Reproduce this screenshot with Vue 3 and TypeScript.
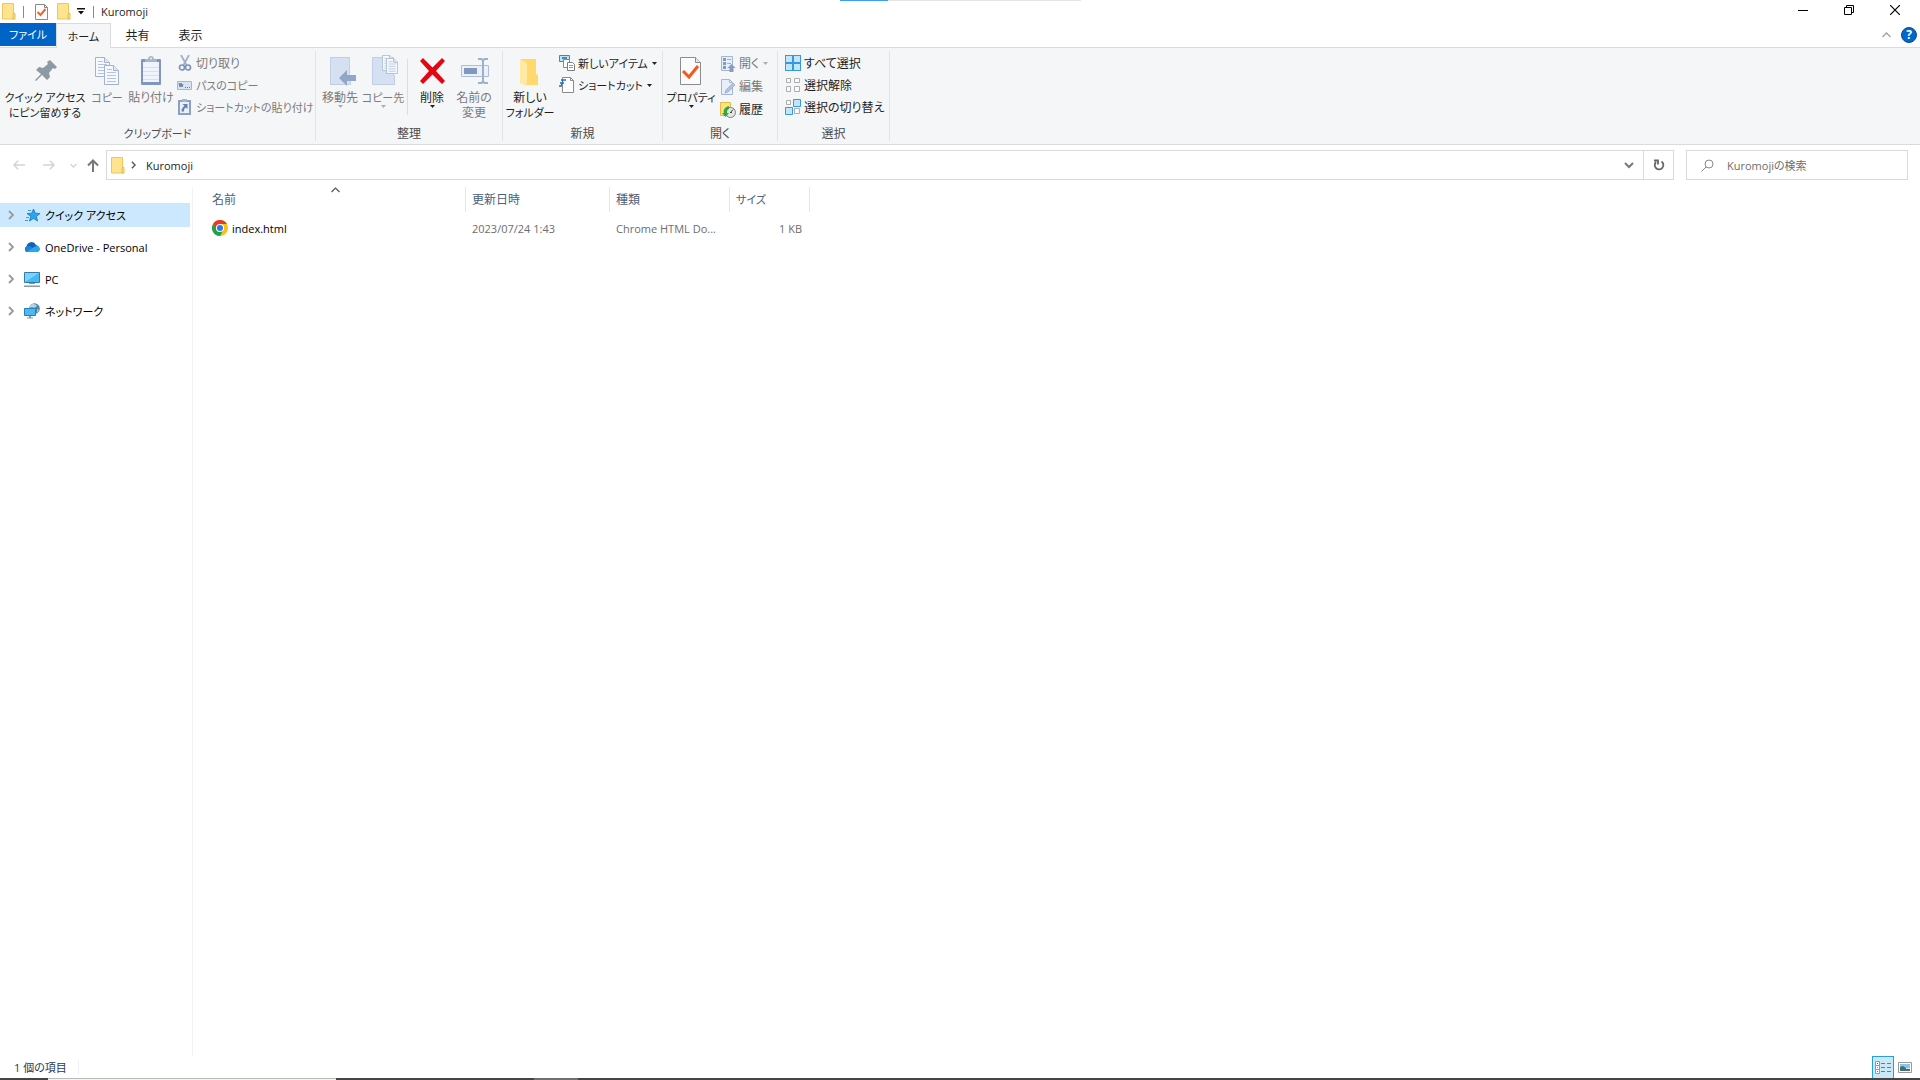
<script setup lang="ts">
import { ref } from 'vue'

interface FileRow {
  name: string
  modified: string
  kind: string
  size: string
}

const folderName = 'Kuromoji'
const query = ref('')
const files: FileRow[] = [
  { name: 'index.html', modified: '2023/07/24 1:43', kind: 'Chrome HTML Do...', size: '1 KB' },
]
</script>

<template>
  <div class="window">
    <svg class="defs" width="0" height="0" aria-hidden="true">
      <symbol id="folder" viewBox="0 0 14 17">
        <path d="M.5.5h11v12h1v3.5H.5z" fill="#ffe48f" stroke="#ebc75c" />
        <path d="M11.5 10.500h1.500v5.500h-2v-4z" fill="#ffe9a6" stroke="#e3ba4a" />
      </symbol>
      <symbol id="page" viewBox="0 0 15 20">
        <path d="M.5.5h9l5 5v14H.5z" fill="#f5f8fd" stroke="#a3b3cd" />
        <path d="M9.500.5v5h5" fill="#dfe8f5" stroke="#a3b3cd" />
        <path d="M3 4.500h5M3 7.500h9M3 10.500h9M3 13.500h9M3 16.500h9" stroke="#b4c4de" />
      </symbol>
      <symbol id="chev" viewBox="0 0 6 10">
        <path d="M1 1l4 4-4 4" fill="none" stroke="currentColor" stroke-width="1.800" />
      </symbol>
      <symbol id="down" viewBox="0 0 5 3">
        <path d="M0 0h5L2.500 3z" fill="currentColor" />
      </symbol>
    </svg>

    <div class="progress"><span></span></div>

    <header class="titlebar">
      <svg width="14" height="17"><use href="#folder" /></svg>
      <span class="bar"></span>
      <button class="quick" aria-label="プロパティ">
        <svg width="13" height="16" viewBox="0 0 13 16">
          <path d="M.5.5h9l3 3v12H.5z" fill="#fcfcfc" stroke="#8b8b8b" />
          <path d="M9.500.5v3h3" fill="none" stroke="#8b8b8b" />
          <path d="M2.500 8l3 3 5-6" fill="none" stroke="#f0642a" stroke-width="2" />
        </svg>
      </button>
      <button class="quick second" aria-label="新しいフォルダー">
        <svg width="14" height="17"><use href="#folder" /></svg>
      </button>
      <button class="quick third" aria-label="クイック アクセス ツール バーのカスタマイズ">
        <svg width="8" height="7" viewBox="0 0 8 7"><path d="M0 0h8v1.500H0zM1 3h6L4 6.500z" fill="#111" /></svg>
      </button>
      <span class="bar last"></span>
      <h1 class="slim">{{ folderName }}</h1>
      <div class="caption">
        <button aria-label="最小化"><svg width="10" height="10" viewBox="0 0 10 10"><path d="M0 5.500h10" stroke="#000" /></svg></button>
        <button aria-label="元に戻す"><svg width="10" height="10" viewBox="0 0 10 10"><path d="M.5 2.500h7v7h-7zM2.500 2.500v-2h7v7h-2" fill="none" stroke="#000" /></svg></button>
        <button aria-label="閉じる"><svg width="10" height="10" viewBox="0 0 10 10"><path d="M0 0l10 10M10 0L0 10" stroke="#000" stroke-width="1.200" /></svg></button>
      </div>
    </header>

    <nav class="tabs">
      <button class="file slim">ファイル</button>
      <button class="active slim">ホーム</button>
      <button>共有</button>
      <button>表示</button>
      <div class="tabtools">
        <button aria-label="リボンの最小化"><svg width="9" height="6" viewBox="0 0 9 6"><path d="M.5 5l4-4 4 4" fill="none" stroke="#a0a0a0" stroke-width="1.300" /></svg></button>
        <button class="help" aria-label="ヘルプ">?</button>
      </div>
    </nav>

    <section class="ribbon">
      <div class="group clipboard">
        <div class="tools">
          <button class="big wide slim">
            <svg width="32" height="32" viewBox="0 0 32 32"><path d="M21 5l7 7-2 2-2-1-4 5 1 4-3 3-5-5-6 6-1-1 6-6-5-4 3-3 4 1 5-4-1-2z" fill="#8d99a3" /></svg>
            <span>クイック アクセス<br>にピン留めする</span>
          </button>
          <button class="big dim w42 slim">
            <svg width="32" height="32" viewBox="0 0 32 32"><use href="#page" x="4" y="2" width="15" height="20" /><use href="#page" x="13" y="10" width="15" height="20" /></svg>
            <span>コピー</span>
          </button>
          <button class="big dim w46">
            <svg width="32" height="32" viewBox="0 0 32 32">
              <rect x="6" y="4" width="20" height="26" rx="1" fill="#8096bd" />
              <rect x="8" y="7" width="16" height="20" fill="#eff4fc" />
              <path d="M8 12.500h16M8 16.500h16M8 20.500h16M8 24.500h16" stroke="#d5e0f1" />
              <path d="M10 7V4h3c0-4 6-4 6 0h3v3z" fill="#a9b6c9" /><circle cx="16" cy="3.500" r="1" fill="#eef" />
            </svg>
            <span>貼り付け</span>
          </button>
          <div class="list">
            <button class="small dim">
              <svg width="16" height="16" viewBox="0 0 16 16"><path d="M4 0l5.500 10M12 0L6.500 10" stroke="#a3b1c6" stroke-width="1.800" /><circle cx="5" cy="12.500" r="2.500" fill="none" stroke="#7e93b8" stroke-width="1.700" /><circle cx="11" cy="12.500" r="2.500" fill="none" stroke="#7e93b8" stroke-width="1.700" /></svg>
              切り取り
            </button>
            <button class="small dim slim">
              <svg width="16" height="16" viewBox="0 0 16 16"><path d="M.5 4.500h14v8H.5z" fill="#d9e3f2" stroke="#a7b7d0" /><path d="M2 6l1 4 1-4 1 4 1-3M8 10.500h1M10 10.500h1M12 10.500h1" fill="none" stroke="#637ba5" /></svg>
              パスのコピー
            </button>
            <button class="small dim slim">
              <svg width="16" height="16" viewBox="0 0 16 16"><path d="M2 2h11v13H2z" fill="#e9f0fa" stroke="#8ba0c4" stroke-width="2" /><path d="M5 0h5v3H5z" fill="#a9b6c9" /><path d="M5.500 5h5v5L9 8.500c-2 1-2 2-2 4H4.500c0-3 1-4 3-5.500z" fill="#6681b0" /></svg>
              ショートカットの貼り付け
            </button>
          </div>
        </div>
        <h2 class="slim">クリップボード</h2>
      </div>

      <div class="group organise">
        <div class="tools">
          <button class="big dim w44">
            <svg width="32" height="32" viewBox="0 0 32 32"><path d="M6.500 2.500h19v18h1v9h-20z" fill="#d5e1f2" stroke="#c0cfe5" /><path d="M15 23l8-8v5h9v6h-9v5z" fill="#93a6c7" /></svg>
            <span>移動先</span>
            <svg class="caret" width="5" height="3"><use href="#down" /></svg>
          </button>
          <button class="big dim w42 slim">
            <svg width="32" height="32" viewBox="0 0 32 32"><path d="M5.500 2.500h21v18h1v9h-22z" fill="#d5e1f2" stroke="#c0cfe5" /><use href="#page" x="15" y="0" width="12" height="16" /><use href="#page" x="19" y="3" width="12" height="16" /></svg>
            <span>コピー先</span>
            <svg class="caret" width="5" height="3"><use href="#down" /></svg>
          </button>
          <span class="rule"></span>
          <button class="big w44">
            <svg width="32" height="32" viewBox="0 0 32 32"><path d="M4 6l3-3 9.500 9.500L26 3l3 3-9 10 9 10-3 3-9.500-9.500L7 29l-3-3 9-10z" fill="#e30613" /></svg>
            <span>削除</span>
            <svg class="caret" width="5" height="3"><use href="#down" /></svg>
          </button>
          <button class="big dim w40">
            <svg width="32" height="32" viewBox="0 0 32 32"><path d="M3.500 10.500h27v11h-27z" fill="#eaf1fb" stroke="#adbdd8" /><path d="M6 13h13v6H6z" fill="#8097bf" /><path d="M20 3h4l1 1 1-1h4v2h-3l-1 1v20l1 1h3v2h-4l-1-1-1 1h-4v-2h3l1-1V6l-1-1h-3z" fill="#9eb0cd" /></svg>
            <span>名前の<br>変更</span>
          </button>
        </div>
        <h2>整理</h2>
      </div>

      <div class="group create">
        <div class="tools">
          <button class="big w52">
            <svg width="32" height="32" viewBox="0 0 32 32"><path d="M6 4h16v15l2 1v10H12L6 28z" fill="#ffd96e" /><path d="M6 4l7 4v19l-1 4-6-3z" fill="#ffe9a5" /></svg>
            <span>新しい</span>
            <span class="slim second-line">フォルダー</span>
          </button>
          <div class="list">
            <button class="small slim">
              <svg width="16" height="16" viewBox="0 0 16 16"><path d="M.5.5h10v6H.5z" fill="#bfe2f5" stroke="#5e7e93" /><path d="M3 2h5v2H3z" fill="#438fb5" /><path d="M4.500 4.500h6v8h-6z" fill="#fff" stroke="#8a8a8a" /><path d="M8.500 7.500h5l2 2v6h-7z" fill="#fff" stroke="#7d7d7d" /><path d="M10 10.500h4M10 12.500h4" stroke="#6aa6d5" /></svg>
              新しいアイテム
              <svg class="drop" width="5" height="3"><use href="#down" /></svg>
            </button>
            <button class="small slim">
              <svg width="16" height="16" viewBox="0 0 16 16"><path d="M3.500.5h8l3 3v12h-11z" fill="#fff" stroke="#8a8a8a" /><path d="M11.500.5v3h3" fill="none" stroke="#8a8a8a" /><path d="M2 3h5M1 6h4M0 9h3" stroke="#1675c6" stroke-width="1.500" /><path d="M4 3L2 9" stroke="#1675c6" /></svg>
              ショートカット
              <svg class="drop" width="5" height="3"><use href="#down" /></svg>
            </button>
          </div>
        </div>
        <h2>新規</h2>
      </div>

      <div class="group open">
        <div class="tools">
          <button class="big w52 slim">
            <svg width="32" height="32" viewBox="0 0 32 32"><path d="M5.500 2.500h15l5 5v22h-20z" fill="#fbfbfb" stroke="#8c8c8c" /><path d="M20.500 2.500v5h5" fill="#e8e8e8" stroke="#8c8c8c" /><path d="M8 16l6 6 9-11" fill="none" stroke="#f2591b" stroke-width="3" /></svg>
            <span>プロパティ</span>
            <svg class="caret" width="5" height="3"><use href="#down" /></svg>
          </button>
          <div class="list tall">
            <button class="small dim">
              <svg width="16" height="16" viewBox="0 0 16 16"><path d="M1.500.5h11v14h-11z" fill="#e6eefa" stroke="#a4b6d3" /><path d="M3 2h3v3H3zM3 6h3v3H3zM3 10h3v3H3z" fill="#8499c0" /><path d="M7 3.500h4M7 7.500h4" stroke="#9eb1d0" /><path d="M11.500 8l4 4h-2v4h-4v-4h-2z" fill="#869cc1" /></svg>
              開く
              <svg class="drop" width="5" height="3"><use href="#down" /></svg>
            </button>
            <button class="small dim">
              <svg width="16" height="16" viewBox="0 0 16 16"><path d="M1.500.5h8l3 3v12h-11z" fill="#e6eefa" stroke="#a4b6d3" /><path d="M9.500.5v3h3" fill="none" stroke="#a4b6d3" /><path d="M5 14l1-3 7-7 2 2-7 7z" fill="#b3c4e0" stroke="#8fa4c8" stroke-width=".7" /></svg>
              編集
            </button>
            <button class="small">
              <svg width="16" height="16" viewBox="0 0 16 16"><path d="M.5.5h10v13H.5z" fill="#ffe180" stroke="#e3bd4b" /><circle cx="10.500" cy="10.500" r="5" fill="#e5e5e5" stroke="#7d7d7d" /><path d="M10.500 10.500l2.500-3M10 10.500h2" stroke="#444" /><path d="M9 4C4 5 3 9 4 11H2l3.500 4L9 11H7c0-3 1-4 2-4z" fill="#31a83a" /></svg>
              履歴
            </button>
          </div>
        </div>
        <h2>開く</h2>
      </div>

      <div class="group select">
        <div class="tools">
          <div class="list">
            <button class="small">
              <svg width="16" height="16" viewBox="0 0 16 16"><path d="M0 0h16v16H0z" fill="#3498e4" /><path d="M1 1h6v6H1zM9 1h6v6H9zM1 9h6v6H1zM9 9h6v6H9z" fill="#c3e5fb" /></svg>
              すべて選択
            </button>
            <button class="small">
              <svg width="16" height="16" viewBox="0 0 16 16"><path d="M1.500 1.500h4v4h-4zM9.500 1.500h5v4h-5zM1.500 9.500h4v5h-4zM9.500 9.500h5v5h-5z" fill="#fafafa" stroke="#adadad" /></svg>
              選択解除
            </button>
            <button class="small">
              <svg width="16" height="16" viewBox="0 0 16 16"><path d="M1.500 1.500h4v4h-4zM9.500 9.500h5v5h-5z" fill="#fafafa" stroke="#adadad" /><path d="M8.500.5h7v7h-7zM.5 8.500h7v7h-7z" fill="#c3e5fb" stroke="#3498e4" /></svg>
              選択の切り替え
            </button>
          </div>
        </div>
        <h2>選択</h2>
      </div>
    </section>

    <section class="addressrow">
      <button class="nav faint" aria-label="戻る"><svg width="12" height="10" viewBox="0 0 12 10"><path d="M12 5H1M5 .7L1 5l4 4.300" fill="none" stroke="currentColor" stroke-width="1.600" /></svg></button>
      <button class="nav faint" aria-label="進む"><svg width="12" height="10" viewBox="0 0 12 10"><path d="M0 5h11M7 .7L11 5 7 9.300" fill="none" stroke="currentColor" stroke-width="1.600" /></svg></button>
      <button class="nav faint narrow" aria-label="最近表示した場所"><svg width="7" height="5" viewBox="0 0 7 5"><path d="M.5 1l3 3 3-3" fill="none" stroke="currentColor" stroke-width="1.400" /></svg></button>
      <button class="nav up" aria-label="上へ"><svg width="12" height="13" viewBox="0 0 12 13"><path d="M6 13V1.500M1 6.500l5-5 5 5" fill="none" stroke="currentColor" stroke-width="2" /></svg></button>
      <div class="address">
        <svg width="14" height="17"><use href="#folder" /></svg>
        <svg class="crumb" width="5" height="8"><use href="#chev" /></svg>
        <button class="path slim">{{ folderName }}</button>
        <button class="history" aria-label="以前の場所"><svg width="10" height="7" viewBox="0 0 10 7"><path d="M1 1l4 4 4-4" fill="none" stroke="#777" stroke-width="2" /></svg></button>
        <button class="refresh" aria-label="最新の情報に更新"><svg width="12" height="12" viewBox="0 0 12 12"><path d="M8.500 2.500A4.300 4.300 0 1 1 3 3M1 1.500h4v4" fill="none" stroke="#666" stroke-width="1.800" /></svg></button>
      </div>
      <label class="search slim">
        <svg width="13" height="13" viewBox="0 0 13 13"><circle cx="8" cy="5" r="4" fill="none" stroke="#888" /><path d="M5 8L.5 12.500" stroke="#888" /></svg>
        <input v-model="query" type="text" aria-label="検索" :placeholder="`${folderName}の検索`">
      </label>
    </section>

    <div class="body">
      <nav class="tree slim">
        <a href="#" class="current">
          <svg class="exp" width="6" height="10"><use href="#chev" /></svg>
          <svg width="16" height="16" viewBox="0 0 16 16"><path d="M9.500 2l1.800 4.200 4.700.3-3.600 3 1.200 4.500-4.100-2.500-4 2.500 1.200-4.500L3 6.500l4.700-.3z" fill="#2fa3ee" stroke="#1777bf" stroke-width=".8" /><path d="M4 3.500h3M2 10.500h3M1 13.500h3" stroke="#3d9ad8" /></svg>
          クイック アクセス
        </a>
        <a href="#">
          <svg class="exp" width="6" height="10"><use href="#chev" /></svg>
          <svg width="16" height="16" viewBox="0 0 16 16"><path d="M3 13a3 3 0 0 1-.5-5.500A5 5 0 0 1 12 6a3.800 3.800 0 0 1 1 7z" fill="#0f62b8" /><path d="M3 13a3 3 0 0 1-.5-5.500c2-.8 4-.4 6 1.500L12 6.500c4.500.5 5 5.500 1 6.500z" fill="#1784d9" /><path d="M3 13l5.500-4L13 7c3.500 1 4 5 0 6z" fill="#28a8ea" /></svg>
          OneDrive - Personal
        </a>
        <a href="#">
          <svg class="exp" width="6" height="10"><use href="#chev" /></svg>
          <svg width="16" height="16" viewBox="0 0 16 16"><path d="M.5 1.500h15v10H.5z" fill="#46b9f5" stroke="#317da8" /><path d="M1 2h14L1 11z" fill="#7bd2fc" /><path d="M5 12h6v1H5zM0 14.500h16v1.500H0z" fill="#8799a8" /></svg>
          PC
        </a>
        <a href="#">
          <svg class="exp" width="6" height="10"><use href="#chev" /></svg>
          <svg width="16" height="16" viewBox="0 0 16 16"><circle cx="10.500" cy="5.500" r="5.300" fill="#4f87ab" /><path d="M6 3c2-3 6-2 7 0l-3 2-2-1-2 1z" fill="#b5d3e2" /><path d="M13 6l2 1-2 3z" fill="#a5c9dc" /><path d="M.5 5.500h11v7H.5z" fill="#4bb9f3" stroke="#2a7fb3" /><path d="M5 13h2v1.500H5zM3 14.500h6v1H3z" fill="#8799a8" /></svg>
          ネットワーク
        </a>
      </nav>

      <main>
        <table>
          <thead>
            <tr>
              <th class="c-name">名前<svg class="sort" width="9" height="6" viewBox="0 0 9 6"><path d="M.5 5l4-4 4 4" fill="none" stroke="#555" stroke-width="1.200" /></svg></th>
              <th class="c-date">更新日時</th>
              <th class="c-kind">種類</th>
              <th class="c-size slim">サイズ</th>
            </tr>
          </thead>
          <tbody class="slim">
            <tr v-for="file in files" :key="file.name">
              <td>
                <a href="#" class="entry">
                  <svg width="16" height="16" viewBox="0 0 16 16"><circle cx="8" cy="8" r="8" fill="#fbc116" /><path d="M1.070 4a8 8 0 0 1 13.860 0H8L4.500 10z" fill="#e33b2e" /><path d="M1.070 4A8 8 0 0 0 8 16l3.300-6H4.600z" fill="#1fa04b" /><circle cx="8" cy="8" r="4" fill="#fff" /><circle cx="8" cy="8" r="3" fill="#2a78ea" /></svg>
                  {{ file.name }}
                </a>
              </td>
              <td>{{ file.modified }}</td>
              <td>{{ file.kind }}</td>
              <td class="num">{{ file.size }}</td>
            </tr>
          </tbody>
        </table>
      </main>
    </div>

    <footer class="status">
      <span class="count slim">1 個の項目</span>
      <div class="views">
        <button class="details" aria-label="詳細">
          <svg width="16" height="13" viewBox="0 0 16 13"><path d="M.5.5h4v12h-4zM.5 4.500h4M.5 8.500h4" fill="#fff" stroke="#999" /><path d="M2 2h1v1H2z" fill="#555" /><path d="M2 6h1v1H2z" fill="#38a2e5" /><path d="M2 10h1v1H2z" fill="#d33" /><path d="M6 2.500h4M12 2.500h4M6 6.500h4M12 6.500h4M6 10.500h4M12 10.500h4" stroke="#777" /></svg>
        </button>
        <button class="thumbs" aria-label="大アイコン">
          <svg width="14" height="11" viewBox="0 0 14 11"><path d="M.5.5h13v10H.5z" fill="#fff" stroke="#999" /><path d="M2 2h10v7H2z" fill="#8fc0ee" /><path d="M2 5l3-1 3 2h4v3H2z" fill="#42706c" /><path d="M8 6h4v1H8z" fill="#cfe2ee" /></svg>
        </button>
      </div>
    </footer>
    <div class="taskbar"><span class="light"></span><span class="mid"></span></div>
  </div>
</template>

<style>
html,
body {
  background: #fff;
}
</style>

<style scoped>
.window {
  position: relative;
  display: flex;
  flex-direction: column;
  min-height: 100vh;
  background: #fff;
  color: #1e1e1e;
  font: 12px/15px "Open Sans", "Noto Sans CJK JP", sans-serif;
  font-feature-settings: "palt";
}
.window * {
  box-sizing: border-box;
}
.defs {
  position: absolute;
}
button,
input {
  margin: 0;
  padding: 0;
  border: 0;
  background: none;
  color: inherit;
  font: inherit;
  font-feature-settings: inherit;
}
a {
  color: inherit;
  text-decoration: none;
}
svg {
  display: block;
  flex: none;
}
h1,
h2 {
  margin: 0;
  font-size: 12px;
  font-weight: 400;
}
.slim {
  font-size: 11px;
}
.progress {
  position: absolute;
  top: 0;
  left: 840px;
  width: 241px;
  height: 1px;
  background: #e5e5e5;
}
.progress span {
  display: block;
  width: 48px;
  height: 1px;
  background: #3e9bff;
}

.titlebar {
  display: flex;
  align-items: center;
  height: 23px;
  padding-left: 2px;
}
.bar {
  width: 1px;
  height: 12px;
  margin: 0 11px 0 7px;
  background: #8a8a8a;
}
.bar.last {
  margin: 0 7px 0 8px;
}
.quick.second {
  margin-left: 9px;
}
.quick.third {
  margin-left: 6px;
}
.caption {
  display: flex;
  align-self: flex-start;
  margin-left: auto;
  padding-right: 2px;
}
.caption button {
  display: flex;
  align-items: center;
  justify-content: center;
  width: 46px;
  height: 20px;
}

.tabs {
  display: flex;
  height: 24px;
  flex: none;
}
.tabs > button {
  width: 53px;
  height: 25px;
}
.tabs > .file {
  width: 56px;
  height: 23px;
  background: #0063c6;
  color: #fff;
}
.tabs > .active {
  position: relative;
  width: 55px;
  border: 1px solid #dadbdc;
  border-bottom: 0;
  background: #f5f6f7;
}
.tabtools {
  display: flex;
  align-items: center;
  gap: 10px;
  margin-left: auto;
  padding-right: 3px;
}
.help {
  width: 16px;
  height: 16px;
  border: 1px solid #0b4c92;
  border-radius: 50%;
  background: #0067cb;
  color: #fff;
  font-weight: 700;
  line-height: 14px;
}

.ribbon {
  display: flex;
  height: 98px;
  flex: none;
  border-top: 1px solid #dadbdc;
  border-bottom: 1px solid #dadbdc;
  background: #f5f6f7;
}
.group {
  display: flex;
  flex: none;
  flex-direction: column;
  justify-content: space-between;
  margin: 3px 0;
  border-right: 1px solid #e2e3e4;
}
.clipboard {
  width: 316px;
}
.organise {
  width: 187px;
}
.create {
  width: 160px;
}
.open {
  width: 115px;
}
.select {
  width: 112px;
}
.tools {
  display: flex;
  align-items: flex-start;
  padding-left: 2px;
}
.clipboard .tools {
  padding-left: 4px;
}
.create .tools {
  padding-left: 1px;
}
.select .tools {
  padding-left: 4px;
}
.group h2 {
  color: #4c4c4c;
  text-align: center;
}
.big {
  display: flex;
  flex: none;
  flex-direction: column;
  align-items: center;
  height: 72px;
  padding-top: 4px;
  white-space: nowrap;
}
.big > span {
  margin-top: 3px;
}
.big > .second-line {
  margin-top: 0;
}
.caret,
.drop {
  color: #222;
}
.drop {
  margin-left: 1px;
}
.dim {
  color: #7b7b7b;
}
.dim .caret,
.dim .drop {
  color: #adadad;
}
.wide {
  width: 82px;
}
.w40 {
  width: 40px;
}
.w42 {
  width: 42px;
}
.w44 {
  width: 44px;
}
.w46 {
  width: 46px;
}
.w52 {
  width: 52px;
}
.rule {
  width: 1px;
  height: 56px;
  margin: 8px 2px 0 3px;
  background: #dcdddd;
}
.list {
  display: flex;
  flex-direction: column;
  padding: 1px 0 0 3px;
}
.small {
  display: flex;
  align-items: center;
  gap: 3px;
  height: 22px;
  white-space: nowrap;
}
.tall .small {
  height: 23px;
}

.addressrow {
  display: flex;
  align-items: center;
  height: 42px;
  flex: none;
  padding: 0 12px 2px 4px;
}
.nav {
  display: flex;
  align-items: center;
  justify-content: center;
  width: 30px;
  height: 30px;
  color: #777;
}
.faint {
  color: #d4d4d4;
}
.nav.narrow {
  width: 18px;
}
.nav.up {
  width: 22px;
  margin-right: 2px;
}
.address {
  display: flex;
  flex: 1;
  align-items: center;
  height: 30px;
  padding-left: 4px;
  border: 1px solid #d9d9d9;
}
.crumb {
  margin: 0 10px 0 6px;
  color: #555;
}
.history {
  display: flex;
  justify-content: center;
  width: 28px;
  margin-left: auto;
}
.refresh {
  display: flex;
  align-items: center;
  justify-content: center;
  width: 30px;
  height: 28px;
  border-left: 1px solid #d9d9d9;
}
.search {
  display: flex;
  align-items: center;
  width: 222px;
  height: 30px;
  margin-left: 12px;
  padding-left: 14px;
  border: 1px solid #d9d9d9;
}
.search input {
  flex: 1;
  min-width: 0;
  margin-left: 13px;
  outline: 0;
}
.search input::placeholder {
  color: #6d6d6d;
}

.body {
  display: flex;
  flex: 1;
}
.tree {
  display: flex;
  flex-direction: column;
  gap: 8px;
  width: 193px;
  padding: 16px 2px 0 0;
  border-right: 1px solid #f2f2f2;
}
.tree a {
  display: flex;
  align-items: center;
  height: 24px;
  padding-left: 8px;
  color: #000;
}
.tree a.current {
  background: #cce8ff;
}
.exp {
  margin-right: 10px;
  color: #9a9a9a;
}
.exp + svg {
  margin-right: 5px;
}
main {
  flex: 1;
}
table {
  width: 617px;
  border-spacing: 0;
  table-layout: fixed;
}
th {
  position: relative;
  height: 25px;
  padding: 0 0 0 6px;
  border-right: 1px solid #e5e5e5;
  color: #4c607a;
  font-weight: 400;
  text-align: left;
}
.sort {
  position: absolute;
  top: 0;
  left: 138px;
}
.c-name {
  width: 273px;
}
.c-date {
  width: 144px;
}
.c-kind {
  width: 120px;
}
.c-size {
  width: 80px;
}
td {
  height: 32px;
  padding: 0 8px 0 6px;
  color: #6d6d6d;
  white-space: nowrap;
}
th:first-child,
td:first-child {
  padding-left: 19px;
}
td.num {
  text-align: right;
}
.entry {
  display: flex;
  align-items: center;
  gap: 4px;
  color: #000;
}

.status {
  display: flex;
  align-items: center;
  height: 22px;
  flex: none;
  padding: 0 8px 0 14px;
}
.count {
  padding-right: 11px;
  border-right: 1px solid #f0f0f0;
  color: #1e395b;
}
.views {
  display: flex;
  align-items: center;
  gap: 4px;
  margin-left: auto;
}
.details {
  display: flex;
  align-items: center;
  justify-content: center;
  width: 22px;
  height: 22px;
  border: 1px solid #26a0da;
  border-bottom: 0;
  background: #cbe8f6;
}
.taskbar {
  display: flex;
  height: 2px;
  flex: none;
  padding-left: 48px;
  background: #454545;
}
.light {
  width: 288px;
  border-top: 1px solid #b9bbb9;
  background: #f3f3f3;
}
.mid {
  width: 44px;
  margin-left: 198px;
  background: #707070;
}
</style>
